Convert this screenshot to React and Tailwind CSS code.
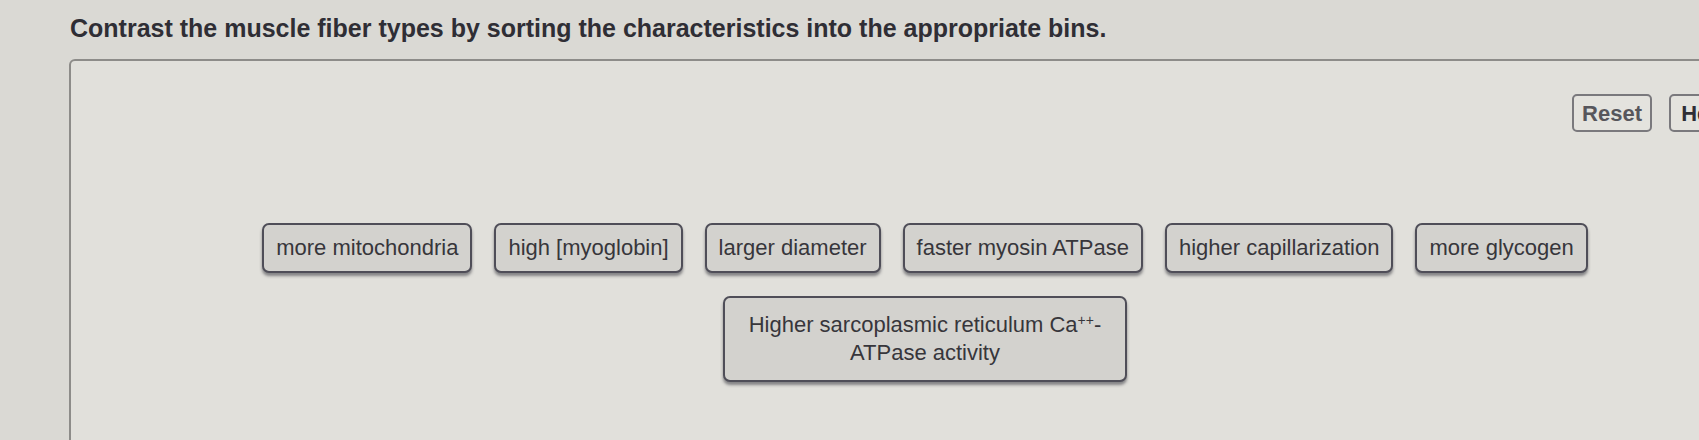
import React from "react";

const chips = [
  "more mitochondria",
  "high [myoglobin]",
  "larger diameter",
  "faster myosin ATPase",
  "higher capillarization",
  "more glycogen",
];

function Chip({ children, className = "" }) {
  return (
    <div
      className={`rounded-[7px] border-2 border-[#4f4e58] bg-[#d3d2ce] text-[22px] text-[#37363b] shadow-[0_3px_3px_rgba(40,40,50,0.5)] ${className}`}
    >
      {children}
    </div>
  );
}

export default function App() {
  return (
    <div
      className="h-[440px] w-full overflow-hidden bg-[#dad9d4]"
      style={{ fontFamily: '"Liberation Sans", Arial, sans-serif' }}
    >
      {/* question */}
      <h1 className="pl-[70px] pt-[14px] text-[25px] font-bold leading-[28px] text-[#2f2e35]">
        Contrast the muscle fiber types by sorting the characteristics into the appropriate bins.
      </h1>

      {/* activity box */}
      <div className="ml-[69px] mt-[17px] h-[420px] w-[1712px] rounded-md border-2 border-[#8d8c89] bg-[#e1e0db]">
        <div className="flex justify-end gap-[17px] pr-[38px] pt-[33px]">
          <button className="h-[38px] w-[80px] rounded-[5px] border-2 border-[#7a797d] bg-[#e4e3de] text-[22px] font-bold text-[#57565c]">
            Reset
          </button>
          <button className="h-[38px] w-[72px] rounded-[5px] border-2 border-[#7a797d] bg-[#e4e3de] text-[22px] font-bold text-[#2f2e35]">
            Help
          </button>
        </div>

        <div className="mt-[91px] flex flex-col items-center gap-[23px]">
          <div className="flex gap-[22px]">
            {chips.map((c) => (
              <Chip key={c} className="px-[12px] py-[11px] leading-[24px]">
                {c}
              </Chip>
            ))}
          </div>
          <Chip className="w-[404px] px-[12px] py-[13px] text-center leading-[28px]">
            Higher sarcoplasmic reticulum Ca<sup className="text-[14px]">++</sup>-
            <br />
            ATPase activity
          </Chip>
        </div>
      </div>
    </div>
  );
}
